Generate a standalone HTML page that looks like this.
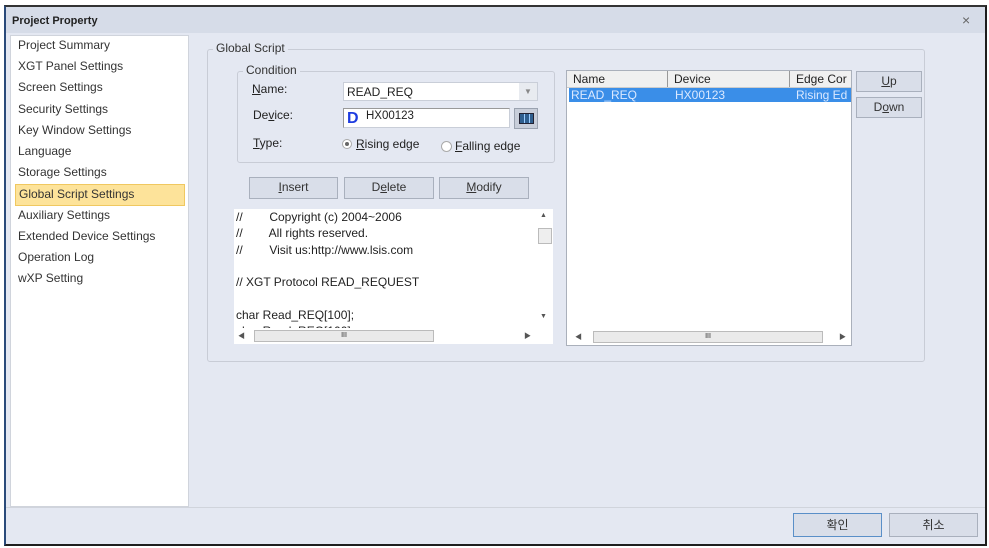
<!DOCTYPE html>
<html><head><meta charset="utf-8"><style>
*{box-sizing:border-box;margin:0;padding:0}
body{width:989px;height:548px;background:#fff;font-family:"Liberation Sans","Noto Sans CJK KR",sans-serif;font-size:12px;color:#222;position:relative;overflow:hidden}
.abs{position:absolute}
.win{left:4px;top:5px;width:983px;height:541px;border:2px solid #1e1e1e;border-top-color:#333;border-left-color:#2a4a7a;background:#e4e8f2}
.title{left:6px;top:7px;width:979px;height:26px;background:#d6dce8;font-size:11px;font-weight:bold;padding:8px 0 0 6px;color:#222}
.u{text-decoration:underline}
.list{left:10px;top:35px;width:179px;height:472px;background:#fff;border:1px solid #d0d4dc}
.list div{height:21.2px;line-height:19px;padding-left:7px;font-size:12px;color:#333}
.list .sel{background:#fde39a;border:1px solid #f0c860;margin:0 3px 0 4px;padding-left:3px}
.grp{border:1px solid #c8ccd6;border-radius:3px}
.lbl{background:#e4e8f2;padding:0 3px;font-size:12px;color:#333}
.btn{background:#d9dee9;border:1px solid #a9b0bd;text-align:center;font-size:12px;line-height:19px;color:#333}
.field{background:#fff;border:1px solid #c9ced8}
.code div{height:16.3px;font-size:12px;white-space:pre}
</style></head><body>
<div class="abs win"></div>
<div class="abs title">Project Property</div>
<div class="abs" style="left:962px;top:12px;font-size:14px;color:#666">×</div>
<div class="abs list">
<div>Project Summary</div><div>XGT Panel Settings</div><div>Screen Settings</div><div>Security Settings</div><div>Key Window Settings</div><div>Language</div><div>Storage Settings</div><div class="sel">Global Script Settings</div><div>Auxiliary Settings</div><div>Extended Device Settings</div><div>Operation Log</div><div>wXP Setting</div>
</div>
<div class="abs grp" style="left:207px;top:49px;width:718px;height:313px"></div>
<div class="abs lbl" style="left:213px;top:41px">Global Script</div>
<div class="abs grp" style="left:237px;top:71px;width:318px;height:92px"></div>
<div class="abs lbl" style="left:243px;top:63px">Condition</div>
<div class="abs" style="left:252px;top:82px;font-size:12px"><span class="u">N</span>ame:</div>
<div class="abs" style="left:253px;top:108px;font-size:12px">De<span class="u">v</span>ice:</div>
<div class="abs" style="left:253px;top:136px;font-size:12px"><span class="u">T</span>ype:</div>
<div class="abs field" style="left:343px;top:82px;width:195px;height:19px;padding:2px 0 0 3px">READ_REQ<span style="position:absolute;right:0;top:0;width:18px;height:17px;background:#e8ebf0;color:#888;font-size:8px;text-align:center;line-height:17px">▼</span></div>
<div class="abs field" style="left:343px;top:108px;width:167px;height:20px;border-top-color:#999;border-left-color:#999"><span style="position:absolute;left:3px;top:1px;color:#1e3ce0;font-size:16px;font-weight:bold">D</span><span style="position:absolute;left:22px;top:1px;font-size:11.5px">HX00123</span></div>
<div class="abs" style="left:514px;top:108px;width:24px;height:21px;background:#c8ceda;border:1px solid #9aa2b0"><div style="margin:4px 0 0 4px;width:15px;height:11px;background:#2f5f8f;border:1px solid #223;background-image:linear-gradient(90deg,transparent 4px,#9cf 4px,#9cf 5px,transparent 5px,transparent 9px,#9cf 9px,#9cf 10px,transparent 10px)"></div></div>
<div class="abs" style="left:342px;top:139px;width:10px;height:10px;border:1px solid #aaa;border-radius:50%;background:#fff"><div style="margin:2px;width:4px;height:4px;border-radius:50%;background:#666"></div></div>
<div class="abs" style="left:356px;top:137px;font-size:12px"><span class="u">R</span>ising edge</div>
<div class="abs" style="left:441px;top:141px;width:11px;height:11px;border:1px solid #aaa;border-radius:50%;background:#fff"></div>
<div class="abs" style="left:455px;top:139px;font-size:12px"><span class="u">F</span>alling edge</div>
<div class="abs btn" style="left:249px;top:177px;width:89px;height:22px"><span class="u">I</span>nsert</div>
<div class="abs btn" style="left:344px;top:177px;width:90px;height:22px">D<span class="u">e</span>lete</div>
<div class="abs btn" style="left:439px;top:177px;width:90px;height:22px"><span class="u">M</span>odify</div>
<div class="abs code" style="left:234px;top:209px;width:319px;height:135px;background:#fff;overflow:hidden;padding:1px 0 0 2px">
<div>//        Copyright (c) 2004~2006</div><div>//        All rights reserved.</div><div>//        Visit us:http://www.lsis.com</div><div> </div><div>// XGT Protocol READ_REQUEST</div><div> </div><div>char Read_REQ[100];</div><div>char Read_REQ[100];</div>
<div style="position:absolute;right:0;top:0;width:18px;height:119px;background:#fff"><div style="position:absolute;left:3px;top:19px;width:14px;height:16px;background:#eee;border:1px solid #bbb"></div><div style="position:absolute;left:5px;top:3px;font-size:7px;color:#555">▲</div><div style="position:absolute;left:5px;top:104px;font-size:7px;color:#555">▼</div></div>
<div style="position:absolute;left:0;bottom:0;width:319px;height:16px;background:#fff"><div style="position:absolute;left:20px;top:2px;width:180px;height:12px;background:#eaeaea;border:1px solid #bbb;text-align:center;font-size:7px;line-height:10px">III</div><div style="position:absolute;left:4px;top:3px;font-size:7px;color:#555">◀</div><div style="position:absolute;left:290px;top:3px;font-size:7px;color:#555">▶</div></div>
</div>
<div class="abs" style="left:566px;top:70px;width:286px;height:276px;background:#fff;border:1px solid #aab0bb;overflow:hidden">
<div style="height:17px;background:#f0f0f0;border-bottom:1px solid #ccc;position:relative;font-size:12px">
<span style="position:absolute;left:6px;top:1px">Name</span><span style="position:absolute;left:100px;top:0;height:16px;border-left:1px solid #999"></span>
<span style="position:absolute;left:107px;top:1px">Device</span><span style="position:absolute;left:222px;top:0;height:16px;border-left:1px solid #999"></span>
<span style="position:absolute;left:229px;top:1px;white-space:nowrap">Edge Cor</span></div>
<div style="height:14px;background:#3a8ee8;color:#dbe9ff;position:relative;font-size:12px;margin-left:2px"><span style="position:absolute;left:2px;top:0">READ_REQ</span><span style="position:absolute;left:106px;top:0">HX00123</span><span style="position:absolute;left:227px;top:0;white-space:nowrap">Rising Ed</span></div>
<div style="position:absolute;left:0;bottom:0;width:286px;height:16px;background:#fff"><div style="position:absolute;left:26px;top:2px;width:230px;height:12px;background:#eaeaea;border:1px solid #bbb;text-align:center;font-size:7px;line-height:10px">III</div><div style="position:absolute;left:8px;top:3px;font-size:7px;color:#555">◀</div><div style="position:absolute;left:272px;top:3px;font-size:7px;color:#555">▶</div></div>
</div>
<div class="abs btn" style="left:856px;top:71px;width:66px;height:21px"><span class="u">U</span>p</div>
<div class="abs btn" style="left:856px;top:97px;width:66px;height:21px">D<span class="u">o</span>wn</div>
<div class="abs" style="left:6px;top:507px;width:979px;height:1px;background:#d0d4dc"></div>
<div class="abs btn" style="left:793px;top:513px;width:89px;height:24px;line-height:22px;border-color:#5a8fc8">확인</div>
<div class="abs btn" style="left:889px;top:513px;width:89px;height:24px;line-height:22px">취소</div>
</body></html>
